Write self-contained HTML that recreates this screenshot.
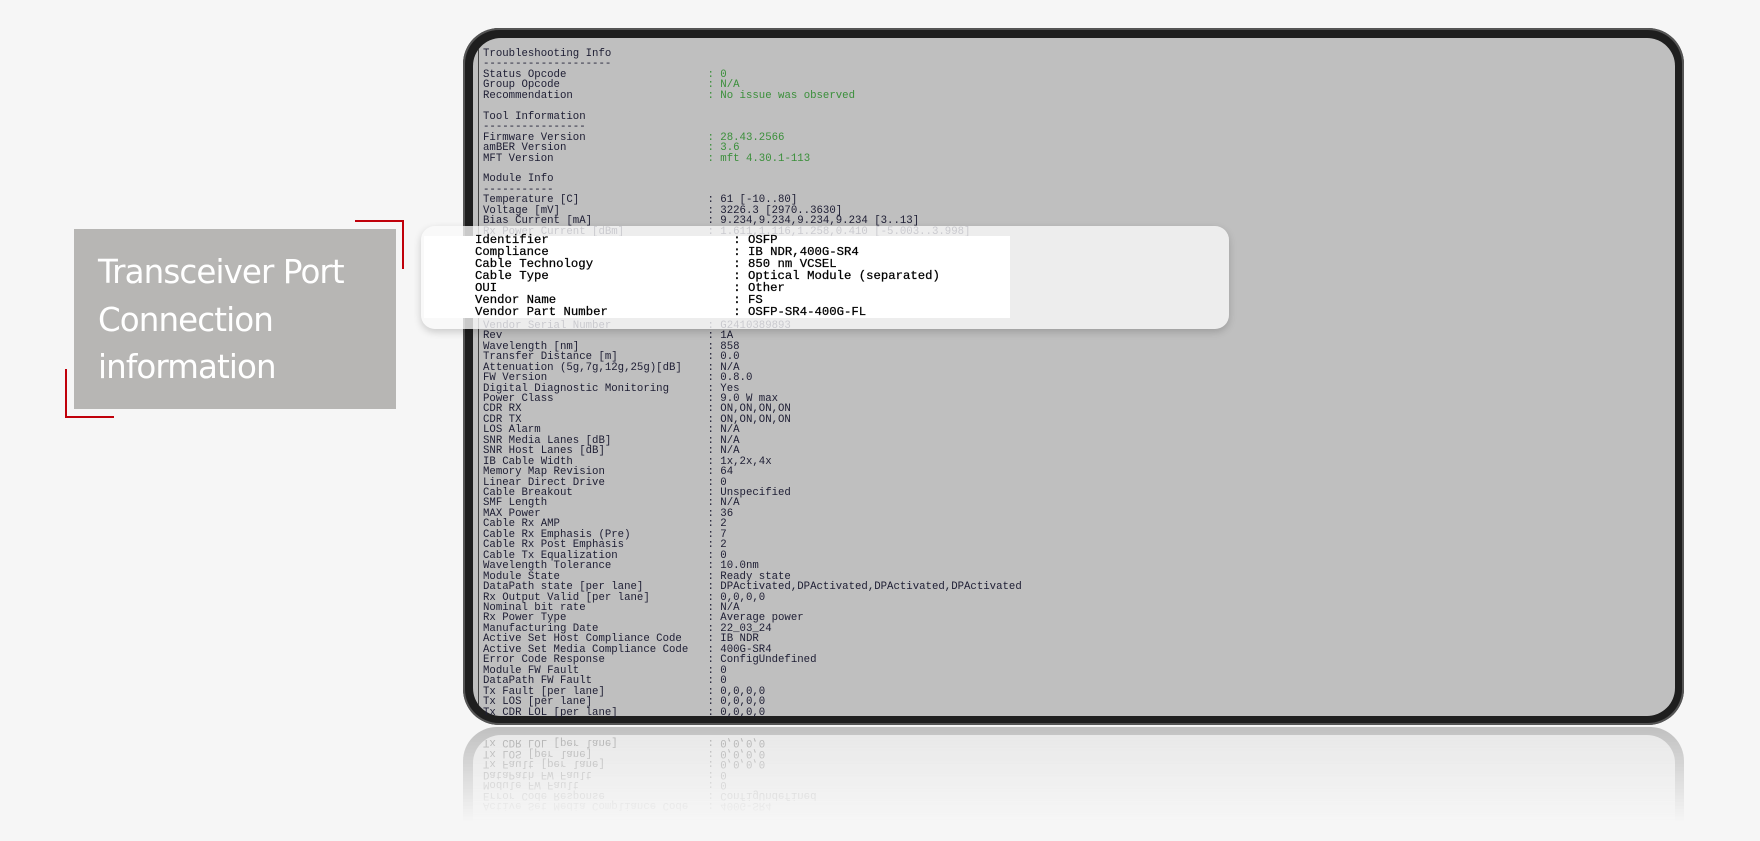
<!DOCTYPE html>
<html><head><meta charset="utf-8"><style>
html,body{margin:0;padding:0;background:#f6f6f6;width:1760px;height:841px;overflow:hidden;position:relative;font-family:"Liberation Sans",sans-serif}
.bezel{position:absolute;left:463px;top:28px;width:1221px;height:697px;border-radius:36px;background:#1e1e1e;box-shadow:0 0 0 2px #555 inset}
.scr{position:absolute;left:473px;top:38px;width:1202px;height:678px;border-radius:28px;background:#bfbfbf;overflow:hidden}
.scr:before{content:"";position:absolute;left:5px;top:0;bottom:0;width:1px;background:#444}
pre{margin:0;font-family:"Liberation Mono",monospace;font-size:10.7px;line-height:10.45px;color:#1d1d33;white-space:pre}
.term{position:absolute;left:483px;top:49px}
.g{color:#3a8f3a}
.card{position:absolute;left:421px;top:226px;width:808px;height:103px;border-radius:14px;background:rgba(250,250,250,0.78);box-shadow:0 3px 8px rgba(0,0,0,0.18)}
.cw{position:absolute;left:424px;top:236px;width:586px;height:82px;background:#fff}
.ct{position:absolute;left:475px;top:234px;font-size:12.3px;line-height:12px;color:#000;-webkit-text-stroke:0.25px #000}
.refl{position:absolute;left:463px;top:727px;width:1221px;height:95px;overflow:hidden;opacity:0.6;-webkit-mask-image:linear-gradient(to bottom,rgba(0,0,0,0.7),rgba(0,0,0,0));mask-image:linear-gradient(to bottom,rgba(0,0,0,0.7),rgba(0,0,0,0))}
.refl .in{position:absolute;left:0;top:0;width:1221px;height:95px;transform:scaleY(-1);transform-origin:center}
.label{position:absolute;left:74px;top:229px;width:322px;height:180px;background:#b7b6b4}
.label div{position:absolute;left:24px;top:20px;color:#fff;font-family:"DejaVu Sans","Liberation Sans",sans-serif;font-size:32.5px;line-height:47.5px;font-weight:normal;letter-spacing:-0.9px;white-space:nowrap}
.r{position:absolute;background:#c0000a}
</style></head><body>
<div class="bezel"></div>
<div class="scr"></div>
<pre class="term">Troubleshooting Info
--------------------
Status Opcode                      <span class="g">: 0</span>
Group Opcode                       <span class="g">: N/A</span>
Recommendation                     <span class="g">: No issue was observed</span>

Tool Information
----------------
Firmware Version                   <span class="g">: 28.43.2566</span>
amBER Version                      <span class="g">: 3.6</span>
MFT Version                        <span class="g">: mft 4.30.1-113</span>

Module Info
-----------
Temperature [C]                    : 61 [-10..80]
Voltage [mV]                       : 3226.3 [2970..3630]
Bias Current [mA]                  : 9.234,9.234,9.234,9.234 [3..13]
Rx Power Current [dBm]             : 1.611,1.116,1.258,0.410 [-5.003..3.998]
Tx Power Current [dBm]             : 1.020,1.110,1.200,1.050
Identifier                         : OSFP
Compliance                         : IB NDR,400G-SR4
Cable Technology                   : 850 nm VCSEL
Cable Type                         : Optical Module (separated)
OUI                                : Other
Vendor Name                        : FS
Vendor Part Number                 : OSFP-SR4-400G-FL
Vendor Serial Number               : G2410389893
Rev                                : 1A
Wavelength [nm]                    : 858
Transfer Distance [m]              : 0.0
Attenuation (5g,7g,12g,25g)[dB]    : N/A
FW Version                         : 0.8.0
Digital Diagnostic Monitoring      : Yes
Power Class                        : 9.0 W max
CDR RX                             : ON,ON,ON,ON
CDR TX                             : ON,ON,ON,ON
LOS Alarm                          : N/A
SNR Media Lanes [dB]               : N/A
SNR Host Lanes [dB]                : N/A
IB Cable Width                     : 1x,2x,4x
Memory Map Revision                : 64
Linear Direct Drive                : 0
Cable Breakout                     : Unspecified
SMF Length                         : N/A
MAX Power                          : 36
Cable Rx AMP                       : 2
Cable Rx Emphasis (Pre)            : 7
Cable Rx Post Emphasis             : 2
Cable Tx Equalization              : 0
Wavelength Tolerance               : 10.0nm
Module State                       : Ready state
DataPath state [per lane]          : DPActivated,DPActivated,DPActivated,DPActivated
Rx Output Valid [per lane]         : 0,0,0,0
Nominal bit rate                   : N/A
Rx Power Type                      : Average power
Manufacturing Date                 : 22_03_24
Active Set Host Compliance Code    : IB NDR
Active Set Media Compliance Code   : 400G-SR4
Error Code Response                : ConfigUndefined
Module FW Fault                    : 0
DataPath FW Fault                  : 0
Tx Fault [per lane]                : 0,0,0,0
Tx LOS [per lane]                  : 0,0,0,0
Tx CDR LOL [per lane]              : 0,0,0,0</pre>

<div class="refl"><div class="in">
<div style="position:absolute;left:0;top:-40px;width:1221px;height:135px;background:#777;border-radius:0 0 34px 34px"></div>
<div style="position:absolute;left:10px;top:-40px;width:1202px;height:127px;background:#d4d4d4;border-radius:0 0 28px 28px"></div>
<pre style="position:absolute;left:20px;bottom:10px;color:#444">Active Set Media Compliance Code   : 400G-SR4
Error Code Response                : ConfigUndefined
Module FW Fault                    : 0
DataPath FW Fault                  : 0
Tx Fault [per lane]                : 0,0,0,0
Tx LOS [per lane]                  : 0,0,0,0
Tx CDR LOL [per lane]              : 0,0,0,0</pre>
</div></div>

<div class="card"></div>
<div class="cw"></div>
<pre class="ct">Identifier                         : OSFP
Compliance                         : IB NDR,400G-SR4
Cable Technology                   : 850 nm VCSEL
Cable Type                         : Optical Module (separated)
OUI                                : Other
Vendor Name                        : FS
Vendor Part Number                 : OSFP-SR4-400G-FL</pre>

<div class="label"><div>Transceiver Port<br>Connection<br>information</div></div>
<div class="r" style="left:355px;top:220px;width:49px;height:2px"></div>
<div class="r" style="left:402px;top:220px;width:2px;height:49px"></div>
<div class="r" style="left:65px;top:369px;width:2px;height:49px"></div>
<div class="r" style="left:65px;top:416px;width:49px;height:2px"></div>
</body></html>
